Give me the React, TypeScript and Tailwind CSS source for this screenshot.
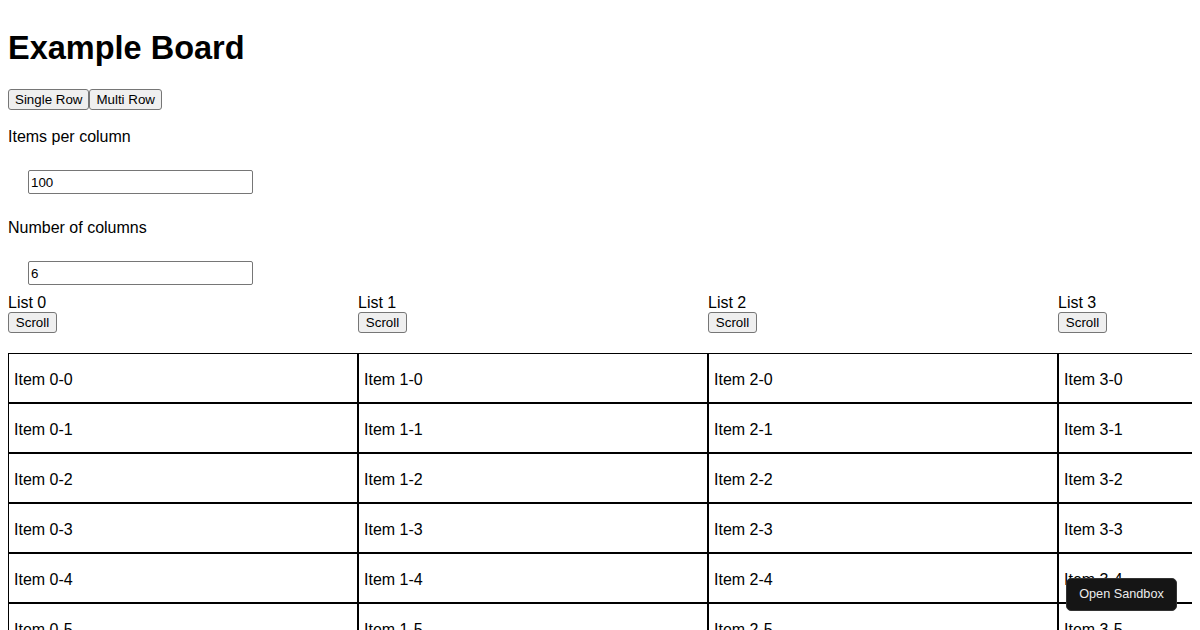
import { useState } from "react";

const font = { fontFamily: '"Liberation Sans", Arial, sans-serif' };

function NativeButton({ label, className = "" }: { label: string; className?: string }) {
  return (
    <button
      className={`h-[21px] px-[6px] bg-[#efefef] border border-[#767676] rounded-[3px] text-[13.33px] leading-none text-black ${className}`}
    >
      {label}
    </button>
  );
}

export default function App() {
  const [perColumn] = useState(100);
  const [columns] = useState(6);

  const lists = Array.from({ length: columns }, (_, c) => c);
  const items = Array.from({ length: 6 }, (_, i) => i);

  return (
    <div className="p-2 bg-white text-black h-[630px] overflow-hidden" style={font}>
      <h1 className="mt-[22px] mb-[22px] text-[32.5px] leading-[37px] font-bold">Example Board</h1>

      <div className="flex">
        <NativeButton label="Single Row" />
        <NativeButton label="Multi Row" />
      </div>

      <p className="mt-[18px] text-base leading-[18px]">Items per column</p>
      <input
        className="block mt-[24px] ml-5 w-[225px] h-6 px-[2px] border border-[#767676] rounded-[2px] text-[13.33px]"
        defaultValue={String(perColumn)}
      />

      <p className="mt-[25px] text-base leading-[18px]">Number of columns</p>
      <input
        className="block mt-[24px] ml-5 w-[225px] h-6 px-[2px] border border-[#767676] rounded-[2px] text-[13.33px]"
        defaultValue={String(columns)}
      />

      {/* Board */}
      <div className="mt-[9px] flex overflow-hidden">
        {lists.map((c) => (
          <div key={c} className="w-[350px] shrink-0">
            <div className="text-base leading-[18px]">List {c}</div>
            <div className="flex">
              <NativeButton label="Scroll" className="w-[49px]" />
            </div>
            <div className="mt-5">
              {items.map((i) => (
                <div
                  key={i}
                  className="h-[50px] border border-black flex items-center pl-[5px] pt-1 text-base"
                >
                  Item {c}-{i}
                </div>
              ))}
            </div>
          </div>
        ))}
      </div>

      <button className="fixed right-[23px] bottom-[19px] w-[111px] h-[33px] bg-[#151515] border border-[#333] rounded-[5px] text-[12.7px] text-[#ececec]">
        Open Sandbox
      </button>
    </div>
  );
}
